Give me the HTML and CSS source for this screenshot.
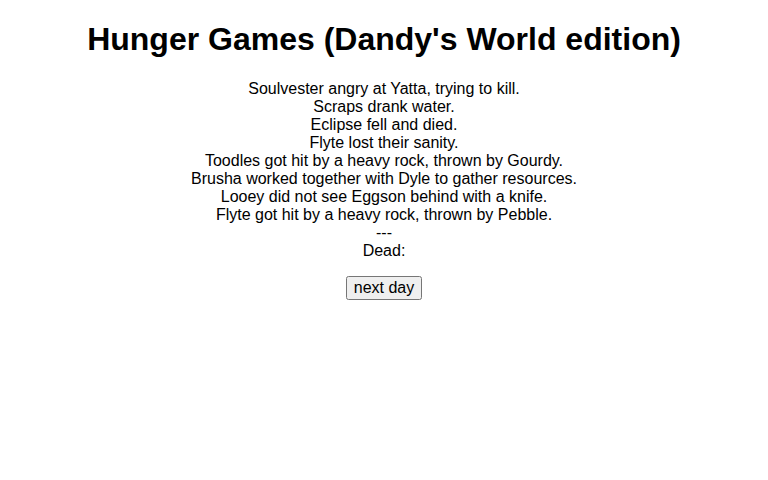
FILE: index.html
```html
<!DOCTYPE html>
<html lang="en">
<head>
<meta charset="utf-8">
<title>Hunger Games (Dandy's World edition)</title>
<link rel="stylesheet" href="styles.css">
</head>
<body>
<h1 class="title">Hunger Games (Dandy's World edition)</h1>
<div class="log">
  <div>Soulvester angry at Yatta, trying to kill.</div>
  <div>Scraps drank water.</div>
  <div>Eclipse fell and died.</div>
  <div>Flyte lost their sanity.</div>
  <div>Toodles got hit by a heavy rock, thrown by Gourdy.</div>
  <div>Brusha worked together with Dyle to gather resources.</div>
  <div>Looey did not see Eggson behind with a knife.</div>
  <div>Flyte got hit by a heavy rock, thrown by Pebble.</div>
  <div>---</div>
  <div>Dead:</div>
</div>
<div class="controls">
  <button class="next" type="button">next day</button>
</div>
</body>
</html>
```

FILE: styles.css
```css
body {
  margin: 8px;
  font-family: "Liberation Sans", Arial, sans-serif;
  font-size: 16px;
  color: #000;
  background: #fff;
  text-align: center;
}

.title {
  font-size: 32px;
  font-weight: bold;
  margin: 13.44px 0 21.44px;
}

.controls {
  margin-top: 16px;
}

.next {
  font-family: "Liberation Sans", Arial, sans-serif;
  font-size: 16px;
}
```
